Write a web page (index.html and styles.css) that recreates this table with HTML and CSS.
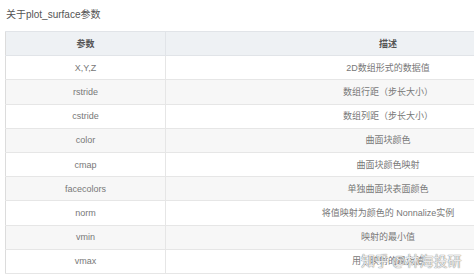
FILE: index.html
```html
<!DOCTYPE html>
<html lang="zh">
<head>
<meta charset="utf-8">
<link rel="stylesheet" href="styles.css">
</head>
<body>
<div class="page">
  <p class="title">关于plot_surface参数</p>
  <div class="table-wrap">
    <table class="params">
      <thead>
        <tr><th class="c1">参数</th><th class="c2">描述</th></tr>
      </thead>
      <tbody>
        <tr><td>X,Y,Z</td><td>2D数组形式的数据值</td></tr>
        <tr><td>rstride</td><td>数组行距（步长大小）</td></tr>
        <tr><td>cstride</td><td>数组列距（步长大小）</td></tr>
        <tr><td>color</td><td>曲面块颜色</td></tr>
        <tr><td>cmap</td><td>曲面块颜色映射</td></tr>
        <tr><td>facecolors</td><td>单独曲面块表面颜色</td></tr>
        <tr><td>norm</td><td>将值映射为颜色的 Nonnalize实例</td></tr>
        <tr><td>vmin</td><td>映射的最小值</td></tr>
        <tr><td>vmax</td><td>用于映射的最大值</td></tr>
      </tbody>
    </table>
  </div>
  <div class="watermark">知乎 @林海投研</div>
</div>
</body>
</html>
```
FILE: styles.css
```css
html, body {
  margin: 0;
  padding: 0;
  background: #ffffff;
  overflow: hidden;
}
.page {
  position: relative;
  width: 474px;
  height: 280px;
  padding: 0 0 0 5px;
  box-sizing: border-box;
  font-family: "Liberation Sans", Arial, "Noto Sans CJK SC", sans-serif;
}
.title {
  margin: 0;
  padding: 8px 0 0 1px;
  height: 31px;
  box-sizing: border-box;
  font-size: 10px;
  line-height: 14px;
  color: #555;
}
.table-wrap {
  width: 469px;
  overflow: hidden;
}
.params {
  width: 606px;
  border-collapse: collapse;
  table-layout: fixed;
  font-size: 9px;
  color: #777;
}
.params th, .params td {
  height: 23.2px;
  padding: 0;
  text-align: center;
  border: 1px solid #e6e6e6;
  line-height: 12px;
}
.params th {
  background: #eef1f4;
  color: #555;
  font-weight: bold;
  border-color: #e1e4e8;
}
.params .c1 { width: 159px; }
.params tbody tr:nth-child(even) td {
  background: #f7f7f7;
}
.params td:first-child, .params th:first-child {
  border-left-color: #dcdcdc;
}
.watermark {
  position: absolute;
  left: 361px;
  top: 252px;
  font-size: 14px;
  line-height: 16px;
  color: rgba(255, 255, 255, 0.85);
  text-shadow: 0 0 1px #777, 0 0 1px #999;
  font-family: "Noto Sans CJK SC", sans-serif;
}
```
